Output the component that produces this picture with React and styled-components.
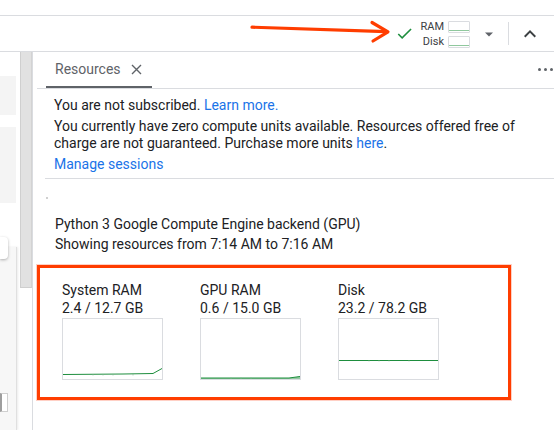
import React from "react";
import styled, { createGlobalStyle } from "styled-components";

const Global = createGlobalStyle`
  html, body { margin: 0; padding: 0; background: #fff; }
  body { font-family: Roboto, "Liberation Sans", Arial, sans-serif; color: #202124; }
  * { box-sizing: border-box; }
`;

const Page = styled.div`
  position: relative;
  width: 554px;
  height: 430px;
  overflow: hidden;
  background: #fff;
  display: flex;
  flex-direction: column;
`;

const TopStrip = styled.div`
  height: 16px;
  flex: none;
  border-bottom: 1px solid #dadce0;
`;

const Toolbar = styled.div`
  height: 36px;
  flex: none;
  border-bottom: 1px solid #dadce0;
  display: flex;
  align-items: center;
  justify-content: flex-end;
  padding-right: 12px;
`;

const IconBox = styled.div`
  width: ${(p) => p.$size || 24}px;
  height: ${(p) => p.$size || 24}px;
  display: flex;
  align-items: center;
  justify-content: center;
  color: ${(p) => p.$color || "#5f6368"};
  margin-left: ${(p) => p.$ml || 0}px;
  flex: none;
  svg { display: block; }
`;

const Status = styled.div`
  display: grid;
  grid-template-columns: auto 22px;
  grid-auto-rows: 12px;
  row-gap: 3px;
  column-gap: 4px;
  align-items: center;
  margin-left: 6px;
  margin-top: 1px;
`;

const StatusLabel = styled.span`
  font-size: 11px;
  line-height: 12px;
  color: #3c4043;
  text-align: right;
`;

const MiniGraph = styled.div`
  height: 12px;
  border: 1px solid #dadce0;
  border-radius: 1px;
  display: flex;
  flex-direction: column;
  justify-content: flex-end;
  padding-bottom: 1px;
  &::after {
    content: "";
    display: block;
    height: 1px;
    background: #8fc89d;
  }
`;

const Divider = styled.div`
  width: 1px;
  height: 23px;
  background: #dadce0;
  margin-left: 7px;
  margin-right: 9px;
`;

const ArrowOverlay = styled.svg`
  position: absolute;
  left: 0;
  top: 0;
  pointer-events: none;
`;

const Body = styled.div`
  flex: 1;
  display: flex;
  min-height: 0;
`;

const LeftPane = styled.div`
  width: 20px;
  flex: none;
  display: flex;
  flex-direction: column;
  padding-top: 24px;
`;

const GrayBlock = styled.div`
  width: 16px;
  height: ${(p) => p.$h}px;
  background: #f4f4f4;
  margin-bottom: ${(p) => p.$mb || 0}px;
  flex: none;
`;

const FloatCard = styled.div`
  position: relative;
  z-index: 1;
  width: 8px;
  height: 22px;
  background: #fff;
  border-radius: 0 4px 4px 0;
  box-shadow: 0 1px 3px rgba(0, 0, 0, 0.3);
  margin-bottom: -12px;
  flex: none;
`;

const SidePanel = styled.div`
  flex: 1;
  width: 17px;
  background: #f7f7f7;
  border-right: 1px solid #e0e0e0;
  box-shadow: 1px 0 2px rgba(0, 0, 0, 0.08);
  display: flex;
  flex-direction: column;
  justify-content: flex-end;
  padding-bottom: 18px;
`;

const SideInput = styled.div`
  width: 8px;
  height: 19px;
  background: #fff;
  border: 1px solid #cfcfcf;
  border-left: 2px solid #9e9e9e;
`;

const ScrollTrack = styled.div`
  width: 13px;
  flex: none;
  border-right: 1px solid #dadce0;
`;

const Thumb = styled.div`
  width: 12px;
  height: 236px;
  background: #e1e1e1;
  border-left: 1px solid #cfcfcf;
  border-right: 1px solid #d3d3d3;
  border-bottom: 1px solid #cfcfcf;
`;

const RightPanel = styled.div`
  flex: 1;
  display: flex;
  flex-direction: column;
  padding-left: 4px;
  min-width: 0;
`;

const TabHeader = styled.div`
  height: 37px;
  flex: none;
  border-bottom: 1px solid #dadce0;
  display: flex;
  align-items: flex-start;
`;

const Tab = styled.div`
  margin-left: 9px;
  width: 106px;
  height: 36px;
  border-bottom: 2px solid #5f6368;
  display: flex;
  align-items: center;
  padding-left: 9px;
  font-size: 14px;
  color: #5f6368;
  gap: 10px;
`;

const Dots = styled.div`
  margin-left: auto;
  margin-right: 1px;
  height: 34px;
  display: flex;
  align-items: center;
  gap: 3px;
  span {
    width: 3px;
    height: 3px;
    border-radius: 50%;
    background: #5f6368;
  }
`;

const Info = styled.div`
  margin-left: 8px;
  padding: 8px 0 5px 9px;
  border-bottom: 1px solid #dadce0;
  font-size: 14px;
  line-height: 17px;
  color: #202124;
`;

const Para = styled.p`
  margin: 0 0 4px 0;
  &:last-child { margin-bottom: 0; }
`;

const Line = styled.span`
  display: block;
  white-space: nowrap;
`;

const Link = styled.a`
  color: #1a73e8;
  text-decoration: none;
`;

const Spinner = styled.div`
  width: 2px;
  height: 2px;
  background: #d0d0d0;
  margin: 18px 0 0 9px;
`;

const Backend = styled.div`
  padding: 15px 0 0 18px;
  font-size: 14px;
  line-height: 20px;
  color: #202124;
`;

const Highlight = styled.div`
  width: 474px;
  margin-top: 11px;
  border: 3px solid #ff3d00;
  box-shadow: 0 0 0 1px rgba(255, 120, 90, 0.35);
  padding: 13px 0 17px 22px;
  display: grid;
  grid-template-columns: repeat(3, 101px);
  column-gap: 37px;
`;

const Metric = styled.div`
  display: flex;
  flex-direction: column;
  font-size: 14px;
  line-height: 18px;
  color: #202124;
  white-space: nowrap;
`;

const Chart = styled.div`
  margin-top: 1px;
  width: 101px;
  height: 62px;
  border: 1px solid #dadce0;
  svg { display: block; }
`;

function Sparkline({ points, fill }) {
  const d = points.map((p, i) => `${i ? "L" : "M"}${p[0]} ${p[1]}`).join(" ");
  const area = `${d} L99 60 L0 60 Z`;
  const ticks = [30, 40, 50, 70];
  return (
    <svg width="99" height="60" viewBox="0 0 99 60">
      {fill && <path d={area} fill="#93c9a1" />}
      <path d={d} fill="none" stroke="#1e8e3e" strokeWidth="1" />
      {ticks.map((x) => {
        const y = points[0][1];
        return <line key={x} x1={x} x2={x} y1={y - 0.5} y2={y + 1} stroke="#7fb58e" strokeWidth="0.6" />;
      })}
    </svg>
  );
}

const metrics = [
  { name: "System RAM", value: "2.4 / 12.7 GB", points: [[0, 55.5], [60, 55], [90, 54.5], [99, 49.5]] },
  { name: "GPU RAM", value: "0.6 / 15.0 GB", points: [[0, 59], [88, 59], [99, 57.5]], fill: true },
  { name: "Disk", value: "23.2 / 78.2 GB", points: [[0, 41.5], [99, 41.5]] },
];

export default function App() {
  return (
    <>
      <Global />
      <Page>
        <TopStrip />
        <Toolbar>
          <IconBox $size={19} $color="#1e8e3e">
            <svg width="19" height="19" viewBox="0 0 24 24" fill="currentColor">
              <path d="M9 16.17L4.83 12l-1.42 1.41L9 19 21 7l-1.41-1.41z" />
            </svg>
          </IconBox>
          <Status>
            <StatusLabel>RAM</StatusLabel>
            <MiniGraph />
            <StatusLabel>Disk</StatusLabel>
            <MiniGraph />
          </Status>
          <IconBox $ml={7}>
            <svg width="24" height="24" viewBox="0 0 24 24" fill="currentColor">
              <path d="M8 10.5l4 4 4-4z" />
            </svg>
          </IconBox>
          <Divider />
          <IconBox>
            <svg width="24" height="24" viewBox="0 0 24 24" fill="#3c4043">
              <path d="M12 8l-6 6 1.41 1.41L12 10.83l4.59 4.58L18 14z" />
            </svg>
          </IconBox>
        </Toolbar>
        <Body>
          <LeftPane>
            <GrayBlock $h={39} $mb={12} />
            <GrayBlock $h={76} $mb={34} />
            <FloatCard />
            <SidePanel>
              <SideInput />
            </SidePanel>
          </LeftPane>
          <ScrollTrack>
            <Thumb />
          </ScrollTrack>
          <RightPanel>
            <TabHeader>
              <Tab>
                Resources
                <svg width="11" height="11" viewBox="0 0 11 11">
                  <path d="M1 1L10 10M10 1L1 10" stroke="#5f6368" strokeWidth="1.4" />
                </svg>
              </Tab>
              <Dots>
                <span />
                <span />
                <span />
              </Dots>
            </TabHeader>
            <Info>
              <Para>
                You are not subscribed. <Link href="#">Learn more.</Link>
              </Para>
              <Para>
                <Line>You currently have zero compute units available. Resources offered free of</Line>
                <Line>
                  <span>charge are not guaranteed. Purchase more units </span>
                  <Link href="#">here</Link>
                  <span>.</span>
                </Line>
              </Para>
              <Para>
                <Link href="#">Manage sessions</Link>
              </Para>
            </Info>
            <Spinner />
            <Backend>
              <div>Python 3 Google Compute Engine backend (GPU)</div>
              <div>Showing resources from 7:14 AM to 7:16 AM</div>
            </Backend>
            <Highlight>
              {metrics.map((m) => (
                <Metric key={m.name}>
                  <span>{m.name}</span>
                  <span>{m.value}</span>
                  <Chart>
                    <Sparkline points={m.points} fill={m.fill} />
                  </Chart>
                </Metric>
              ))}
            </Highlight>
          </RightPanel>
        </Body>
        <ArrowOverlay width="554" height="60" viewBox="0 0 554 60">
          <g stroke="#ff3d00" strokeWidth="3.2" strokeLinecap="round" strokeLinejoin="round" fill="none">
            <path d="M252 27.2 L386 31.6" />
            <path d="M372 22.5 L388 31.8 L373 41" />
          </g>
        </ArrowOverlay>
      </Page>
    </>
  );
}
